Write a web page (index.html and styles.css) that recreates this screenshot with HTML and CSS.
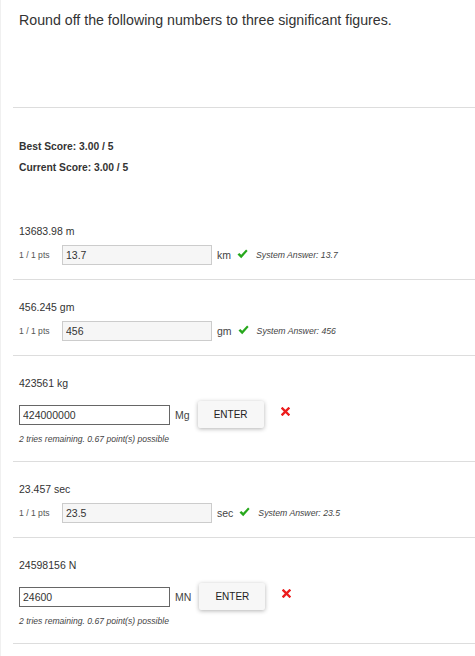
FILE: index.html
```html
<!DOCTYPE html>
<html lang="en">
<head>
  <meta charset="UTF-8" />
  <meta name="viewport" content="width=device-width, initial-scale=1.0"/>
  <title>Significant Figures</title>
  <link rel="stylesheet" href="styles.css">
</head>
<body>

<div class="problem-page">
  <div class="problem-statement">
    <p>Round off the following numbers to three significant figures.</p>
  </div>

  <div class="score-box">
    <p>Best Score: 3.00 / 5</p>
    <p>Current Score: 3.00 / 5</p>
  </div>

  <div class="part">
    <p class="part-label">13683.98 m</p>
    <div class="answer-row">
      <span class="pts">1 / 1 pts</span>
      <input class="answer-input locked" type="text" value="13.7" readonly />
      <span class="unit">km</span>
      <svg class="mark-ok" width="11" height="10" viewBox="0 0 11 10"><path d="M0.5 5.6 L2.3 3.9 L4.2 5.8 L9.1 0.6 L10.6 2.1 L4.2 9.2 Z" fill="#27a81c"/></svg>
      <span class="system-answer">System Answer: 13.7</span>
    </div>
  </div>

  <div class="part">
    <p class="part-label">456.245 gm</p>
    <div class="answer-row">
      <span class="pts">1 / 1 pts</span>
      <input class="answer-input locked" type="text" value="456" readonly />
      <span class="unit">gm</span>
      <svg class="mark-ok" width="11" height="10" viewBox="0 0 11 10"><path d="M0.5 5.6 L2.3 3.9 L4.2 5.8 L9.1 0.6 L10.6 2.1 L4.2 9.2 Z" fill="#27a81c"/></svg>
      <span class="system-answer">System Answer: 456</span>
    </div>
  </div>

  <div class="part wrong">
    <p class="part-label">423561 kg</p>
    <div class="answer-row">
      <input class="answer-input open" type="text" value="424000000" />
      <span class="unit">Mg</span>
      <button class="enter-btn">Enter</button>
      <svg class="mark-bad" width="9" height="9" viewBox="0 0 9 9"><path d="M1.5 1.5 L7.5 7.5 M7.5 1.5 L1.5 7.5" stroke="#ec1c1c" stroke-width="2.4" stroke-linecap="square"/></svg>
    </div>
    <p class="tries">2 tries remaining. 0.67 point(s) possible</p>
  </div>

  <div class="part">
    <p class="part-label">23.457 sec</p>
    <div class="answer-row">
      <span class="pts">1 / 1 pts</span>
      <input class="answer-input locked" type="text" value="23.5" readonly />
      <span class="unit">sec</span>
      <svg class="mark-ok" width="11" height="10" viewBox="0 0 11 10"><path d="M0.5 5.6 L2.3 3.9 L4.2 5.8 L9.1 0.6 L10.6 2.1 L4.2 9.2 Z" fill="#27a81c"/></svg>
      <span class="system-answer">System Answer: 23.5</span>
    </div>
  </div>

  <div class="part wrong">
    <p class="part-label">24598156 N</p>
    <div class="answer-row">
      <input class="answer-input open" type="text" value="24600" />
      <span class="unit">MN</span>
      <button class="enter-btn">Enter</button>
      <svg class="mark-bad" width="9" height="9" viewBox="0 0 9 9"><path d="M1.5 1.5 L7.5 7.5 M7.5 1.5 L1.5 7.5" stroke="#ec1c1c" stroke-width="2.4" stroke-linecap="square"/></svg>
    </div>
    <p class="tries">2 tries remaining. 0.67 point(s) possible</p>
  </div>
</div>

</body>
</html>
```

FILE: styles.css
```css
body {
  font-family: 'Liberation Sans', Arial, sans-serif;
  margin: 0;
  padding: 0;
  background-color: #fff;
  color: #333;
}

p {
  margin: 0;
}

.problem-page {
  height: 656px;
  overflow: hidden;
  border-left: 1px solid #f0f0f0;
  padding-left: 12px;
}

.problem-statement {
  height: 108px;
  padding: 11px 0 0 6px;
  box-sizing: border-box;
  border-bottom: 1px solid #ddd;
  font-size: 14.2px;
  line-height: 18px;
  color: #333;
}

.score-box {
  padding: 28px 0 0 6px;
  height: 96px;
  box-sizing: border-box;
  font-size: 10.3px;
  font-weight: 700;
  line-height: 21px;
  color: #333;
}

.part {
  padding: 20px 0 14px 6px;
  border-bottom: 1px solid #ddd;
}

.part-label {
  font-size: 10.5px;
  line-height: 14px;
}

.answer-row {
  display: flex;
  align-items: center;
  margin-top: 7px;
  height: 20px;
}

.pts {
  font-size: 8.6px;
  width: 43px;
  color: #555;
}

.answer-input {
  width: 150px;
  height: 20px;
  box-sizing: border-box;
  padding: 0 3px;
  font-family: inherit;
  font-size: 10.5px;
  color: #333;
  outline: none;
}

.answer-input.locked {
  background-color: #f6f6f6;
  border: 1px solid #ccc;
}

.answer-input.open {
  width: 151px;
  background-color: #fff;
  border: 1px solid #666;
}

.unit {
  font-size: 10.5px;
  margin-left: 5px;
  color: #444;
}

.mark-ok {
  margin-left: 6px;
  margin-top: -3px;
}

.system-answer {
  font-size: 8.7px;
  font-style: italic;
  margin-left: 8px;
  color: #444;
}

.part.wrong .answer-row {
  height: 35px;
}

.enter-btn {
  width: 66px;
  height: 27px;
  margin-left: 8px;
  border: none;
  border-radius: 2px;
  background-color: #f7f7f7;
  box-shadow: 0 1px 4px rgba(0, 0, 0, 0.3);
  font-family: inherit;
  font-size: 10px;
  text-transform: uppercase;
  color: #222;
  cursor: pointer;
}

.mark-bad {
  margin-left: 17px;
  margin-top: -6px;
}

.tries {
  font-size: 8.6px;
  font-style: italic;
  line-height: 11px;
  margin-top: 2px;
  color: #444;
}

.part.wrong {
  padding-bottom: 16px;
}
```
